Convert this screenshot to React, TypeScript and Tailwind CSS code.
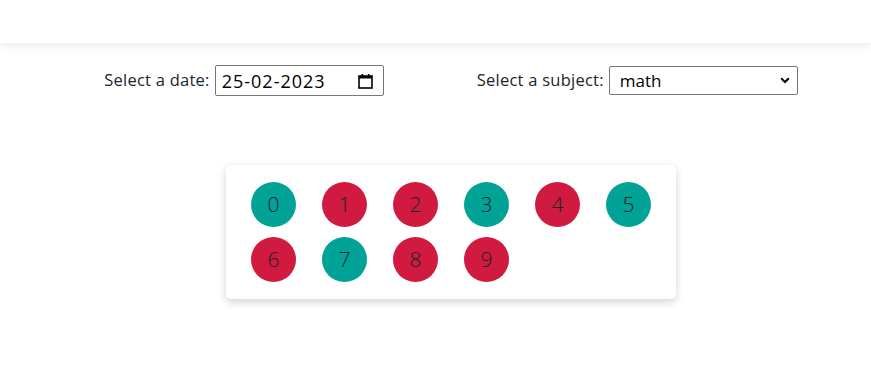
import React from 'react';

const numbers = [
  { n: 0, ok: true },
  { n: 1, ok: false },
  { n: 2, ok: false },
  { n: 3, ok: true },
  { n: 4, ok: false },
  { n: 5, ok: true },
  { n: 6, ok: false },
  { n: 7, ok: true },
  { n: 8, ok: false },
  { n: 9, ok: false },
];

function CalendarIcon() {
  return (
    <svg width="15" height="16" viewBox="0 0 15 16" className="block">
      <rect x="1" y="3" width="13" height="12" fill="none" stroke="#000" strokeWidth="1.6" />
      <rect x="1" y="3" width="13" height="2.5" fill="#000" />
      <rect x="3.5" y="1" width="1.6" height="3" fill="#000" />
      <rect x="9.9" y="1" width="1.6" height="3" fill="#000" />
    </svg>
  );
}

function ChevronDown() {
  return (
    <svg width="10" height="7" viewBox="0 0 10 7" className="block">
      <path d="M1.2 1.2 L5 5 L8.8 1.2" fill="none" stroke="#000" strokeWidth="2" />
    </svg>
  );
}

export default function App() {
  return (
    <div className="min-h-[374px] bg-white text-[#212529]" style={{ fontFamily: '"Open Sans", "Noto Sans", sans-serif' }}>
      <header className="h-[43px] bg-white shadow-[0_4px_8px_rgba(0,0,0,0.07)]" />

      <div className="flex justify-center gap-[93px] pl-[31px] pt-[22px]">
        <div className="flex items-center gap-[5px]">
          <span className="text-[16.5px] tracking-[0.25px]">Select a date:</span>
          <div className="w-[169px] h-[31px] border border-[#767676] rounded-[2px] flex items-center justify-between pl-[6px] pr-[10px]">
            <span className="text-[18px] leading-none text-black tracking-[1px]">25-02-2023</span>
            <CalendarIcon />
          </div>
        </div>
        <div className="flex items-center gap-[5px]">
          <span className="text-[16.5px] tracking-[0.25px]">Select a subject:</span>
          <div className="w-[189px] h-[29px] border border-[#767676] rounded-[2px] flex items-center justify-between pl-[10px] pr-[7px]">
            <span className="text-[17px] leading-none text-black">math</span>
            <ChevronDown />
          </div>
        </div>
      </div>

      <div className="flex justify-center pl-[31px] pt-[69px]">
        <div className="w-[450px] h-[134px] bg-white rounded-[5px] shadow-[0_3px_8px_rgba(0,0,0,0.18)] pl-[25px] pt-[17px]">
          <div className="grid grid-cols-[repeat(6,45px)] gap-x-[26px] gap-y-[10px]">
            {numbers.map((item) => (
              <div
                key={item.n}
                className={
                  'w-[45px] h-[45px] rounded-full flex items-center justify-center text-[21px] font-light text-[#1c212b] ' +
                  (item.ok ? 'bg-[#00a396]' : 'bg-[#d01a3f]')
                }
              >
                {item.n}
              </div>
            ))}
          </div>
        </div>
      </div>
    </div>
  );
}
